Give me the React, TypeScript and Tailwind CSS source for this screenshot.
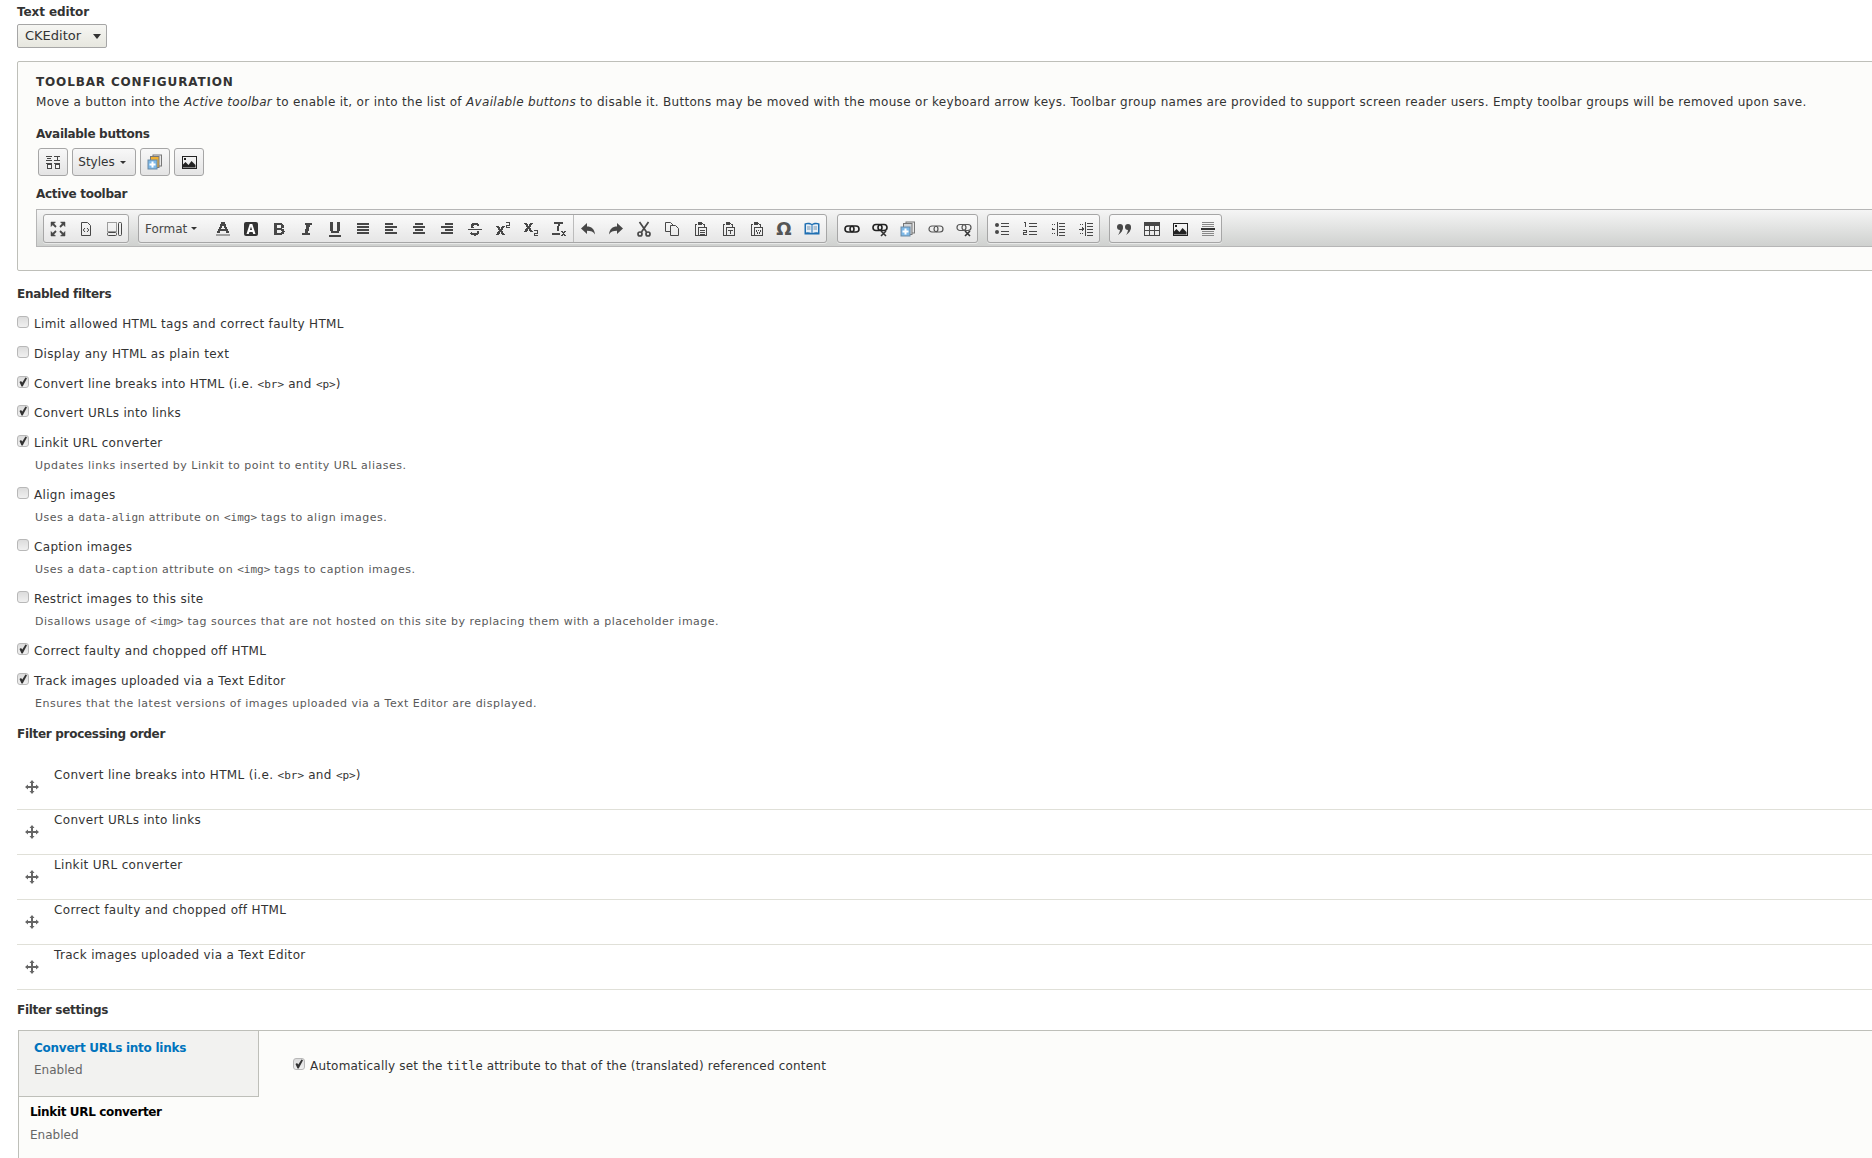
import type { ReactNode } from "react";

const ink = "#474747";

function Glyph({ children, size = 16 }: { children: ReactNode; size?: number }) {
  return (
    <svg width={size} height={size} viewBox="0 0 16 16" fill={ink} shapeRendering="crispEdges">
      {children}
    </svg>
  );
}

function Lines({ rows }: { rows: [number, number][] }) {
  return (
    <Glyph>
      {rows.map(([x, w], i) => (
        <rect key={i} x={x} y={2 + i * 3} width={w} height="2" />
      ))}
    </Glyph>
  );
}

function Clipboard({ children }: { children: ReactNode }) {
  return (
    <Glyph>
      <path d="M3 3h2v1H4v10h2v1H3zM11 3h2v4h-1V4h-1z" />
      <rect x="5.5" y="1" width="5" height="3" rx="1" />
      <rect x="6.5" y="6.5" width="7.5" height="8" fill="none" stroke={ink} />
      {children}
    </Glyph>
  );
}

function ChainLink({ dark, broken }: { dark?: boolean; broken?: boolean }) {
  const stroke = dark ? "#222" : "#555";
  return (
    <svg width="16" height="16" viewBox="0 0 16 16" fill="none" stroke={stroke} strokeWidth={dark ? 1.6 : 1.2}>
      <rect x="1" y={broken ? 3.5 : 5} width="9" height="6" rx="3" />
      <rect x="6" y={broken ? 3.5 : 5} width="9" height="6" rx="3" />
      {broken && <path d="M9 10l5 5M14 10l-5 5" stroke="#333" strokeWidth="1.6" />}
    </svg>
  );
}

function Stack({ warm }: { warm?: boolean }) {
  return (
    <svg width="16" height="16" viewBox="0 0 16 16">
      <rect x="6" y="1" width="8.5" height="11" fill="#e8e8e8" stroke="#777" />
      <rect x="3.5" y="2.5" width="8.5" height="11" fill={warm ? "#f0b030" : "#d0d4d8"} stroke="#777" />
      <rect x="1" y="6" width="9" height="9" fill="#7db9e8" stroke="#6a8aa5" />
      <path d="M4.500 7.500h2v2h2v2h-2v2h-2v-2h-2v-2h2z" fill="#fff" />
    </svg>
  );
}

function ImageGlyph() {
  return (
    <Glyph>
      <rect x="1" y="2" width="14" height="12" fill="none" stroke="#222" />
      <rect x="3" y="4" width="2" height="2" fill="#222" />
      <path d="M1.5 13.5V11l3-3 3 3 3-4 4 4v2.5z" fill="#222" shapeRendering="auto" />
    </Glyph>
  );
}

const icons: Record<string, ReactNode> = {
  maximize: (
    <svg width="16" height="16" viewBox="0 0 16 16" fill={ink} stroke={ink}>
      <path d="M1 1h4.500L1 5.500zM15 1v4.500L10.500 1zM1 15v-4.500L5.500 15zM15 15h-4.500L15 10.500z" strokeWidth="0.5" />
      <path d="M3 3l3 3M13 3l-3 3M3 13l3-3M13 13l-3-3" strokeWidth="1.800" />
    </svg>
  ),
  source: (
    <svg width="16" height="16" viewBox="0 0 16 16" fill="none" stroke={ink}>
      <path d="M3.500 1.500h6l3 3v10h-9z" />
      <path d="M7 7L5.200 9 7 11M9 7l1.800 2L9 11" />
    </svg>
  ),
  sdm: (
    <svg width="16" height="16" viewBox="0 0 16 16" fill="none" stroke={ink}>
      <rect x="1.500" y="1.500" width="9" height="9" strokeDasharray="1 1" />
      <rect x="1.500" y="11.500" width="9" height="3" rx="1" />
      <rect x="12.500" y="1.500" width="3" height="13" rx="1" />
    </svg>
  ),
  color: (
    <Glyph>
      <path d="M6.500 1h3L14 11.500h-2.600l-.8-2H5.400l-.8 2H2zM8 4L6.200 7.600h3.600z" />
      <rect x="1" y="13" width="14" height="2" fill="#a0a0a0" />
    </Glyph>
  ),
  bg: (
    <svg width="16" height="16" viewBox="0 0 16 16">
      <rect x="1" y="1" width="14" height="14" rx="2" fill="#333" />
      <path d="M6.700 3h2.600l3.200 10h-2.300l-.6-2H6.400l-.6 2H3.500zM8 5.500L6.900 9h2.200z" fill="#fff" />
    </svg>
  ),
  bold: (
    <Glyph>
      <path d="M3 2h6.500C12 2 13 3.400 13 5c0 1.200-.7 2.200-1.800 2.600C12.700 8 13.600 9.200 13.600 10.700 13.600 12.800 12 14 9.800 14H3zM5.800 4.200v2.700h3c1 0 1.500-.5 1.500-1.400 0-.8-.5-1.300-1.500-1.300zM5.800 9v2.800h3.300c1 0 1.700-.5 1.700-1.400S10.100 9 9.100 9z" />
    </Glyph>
  ),
  italic: (
    <Glyph>
      <path d="M6 2h7v2h-2L9 12h2v2H3v-2h2.500L7.500 4H5.500z" />
    </Glyph>
  ),
  underline: (
    <Glyph>
      <path d="M3 1h2.800v7c0 1.600.8 2.300 2.200 2.300s2.200-.7 2.200-2.300V1H13v7.200c0 3-1.800 4.300-5 4.300s-5-1.300-5-4.300zM2 14h12v1.500H2z" />
    </Glyph>
  ),
  justify: <Lines rows={[[2, 12], [2, 12], [2, 12], [2, 12]]} />,
  left: <Lines rows={[[2, 8], [2, 12], [2, 8], [2, 12]]} />,
  center: <Lines rows={[[4, 8], [2, 12], [4, 8], [2, 12]]} />,
  right: <Lines rows={[[6, 8], [2, 12], [6, 8], [2, 12]]} />,
  strike: (
    <Glyph>
      <path d="M12.500 3.200 11.800 5.300C10.700 4.600 9.500 4.200 8.400 4.200 7 4.200 6.200 4.800 6.200 5.500c0 .5.300.9 1 1.200h-3c-.4-.5-.7-1.100-.7-1.900C3.500 2.800 5.500 1.500 8.300 1.500c1.700 0 3.100.6 4.200 1.700zM11.800 9.500c.4.500.7 1.100.7 1.800 0 2.100-1.900 3.400-4.700 3.400-1.900 0-3.500-.6-4.800-1.800l.9-2c1.200 1 2.500 1.500 3.800 1.500 1.300 0 2.100-.5 2.100-1.300 0-.6-.4-1.100-1.300-1.600z" />
      <rect x="1" y="7.500" width="14" height="1.500" />
    </Glyph>
  ),
  sup: (
    <Glyph>
      <path d="M1 5h2.800l1.700 2.600L7.200 5H10L7 9.300 10.200 14H7.300l-1.800-2.800L3.700 14H.8L4 9.300z" />
      <path d="M11 1h4v3.500h-3V6h3v1h-4V3.500h3V2h-3z" />
    </Glyph>
  ),
  sub: (
    <Glyph>
      <path d="M1 2h2.800l1.700 2.600L7.200 2H10L7 6.300 10.200 11H7.300L5.500 8.200 3.700 11H.8L4 6.300z" />
      <path d="M11 9h4v3.500h-3V14h3v1h-4v-3.500h3V10h-3z" />
    </Glyph>
  ),
  remove: (
    <Glyph>
      <path d="M3 1h9v2H9L7.500 10H5.500L7 3H3z" />
      <rect x="1" y="12" width="8" height="1.500" />
      <path d="M10 10h1.500l1 1.500 1-1.500H15l-1.800 2.500L15 15h-1.500l-1-1.500-1 1.500H10l1.800-2.500z" />
    </Glyph>
  ),
  undo: (
    <svg width="16" height="16" viewBox="0 0 16 16" fill={ink}>
      <path d="M7 2v3.500c4.500 0 7.500 2.500 8 8-1.500-3-4-3.800-8-3.800V13L1 7.500z" />
    </svg>
  ),
  redo: (
    <svg width="16" height="16" viewBox="0 0 16 16" fill={ink}>
      <path d="M9 2v3.500c-4.500 0-7.500 2.500-8 8 1.500-3 4-3.800 8-3.800V13l6-5.500z" />
    </svg>
  ),
  cut: (
    <svg width="16" height="16" viewBox="0 0 16 16" fill="none" stroke={ink} strokeWidth="1.700">
      <path d="M3.500 1l7 10M12.500 1l-7 10" />
      <circle cx="4" cy="13" r="2" />
      <circle cx="12" cy="13" r="2" />
    </svg>
  ),
  copy: (
    <svg width="16" height="16" viewBox="0 0 16 16" fill="none" stroke={ink}>
      <path d="M6.500 10.500h-5v-9h5l3 3" />
      <path d="M6.500 4.500h5l3 3v7h-8z" />
    </svg>
  ),
  paste: (
    <Clipboard>
      <path d="M8 8.500h4.500v1H8zM8 10.500h4.500v1H8zM8 12.500h4.500v1H8z" />
    </Clipboard>
  ),
  pastetext: (
    <Clipboard>
      <path d="M8 8.500h4.500v1.200H11V13H9.500V9.700H8z" />
    </Clipboard>
  ),
  pasteword: (
    <Clipboard>
      <path d="M7.800 8.500h1l.6 3 .6-3h1l.6 3 .6-3h.8l-1 4.500h-.9l-.6-2.800-.6 2.800h-.9z" />
    </Clipboard>
  ),
  omega: <span className="text-[18px] leading-none font-bold tracking-normal text-[#555]">Ω</span>,
  book: (
    <svg width="16" height="16" viewBox="0 0 16 16">
      <path d="M0.500 2.500C3 1.500 6 1.500 8 3c2-1.500 5-1.500 7.500-.5v11H0.500z" fill="#1f6fb2" />
      <path d="M2 3.500c2-.6 4-.4 5.500.6v8c-1.500-.8-3.500-1-5.500-.6zM14 3.500c-2-.6-4-.4-5.500.6v8c1.500-.8 3.500-1 5.500-.6z" fill="#e6eef5" />
      <path d="M3 6h3.500M3 8h3.500M9.500 6H13M9.500 8H13" stroke="#7a97b0" />
    </svg>
  ),
  drupallink: <ChainLink dark />,
  drupalunlink: <ChainLink dark broken />,
  drupalimage: <Stack />,
  link: <ChainLink />,
  unlink: <ChainLink broken />,
  bullets: (
    <Glyph>
      <circle cx="3" cy="4" r="2" shapeRendering="auto" />
      <circle cx="3" cy="11" r="2" shapeRendering="auto" />
      <rect x="7" y="2" width="8" height="1" />
      <rect x="7" y="5" width="8" height="1" />
      <rect x="7" y="10" width="8" height="1" />
      <rect x="7" y="13" width="8" height="1" />
    </Glyph>
  ),
  numbers: (
    <Glyph>
      <path d="M2 1h2v5H3V2H2zM1 9h4v3H2v1h3v1H1v-3h3v-1H1z" />
      <rect x="7" y="2" width="8" height="1" />
      <rect x="7" y="5" width="8" height="1" />
      <rect x="7" y="10" width="8" height="1" />
      <rect x="7" y="13" width="8" height="1" />
    </Glyph>
  ),
  outdent: (
    <Glyph>
      <rect x="7" y="1" width="1" height="14" />
      <rect x="9" y="2" width="6" height="1" />
      <rect x="9" y="5" width="6" height="1" />
      <rect x="9" y="8" width="6" height="1" />
      <rect x="9" y="11" width="6" height="1" />
      <rect x="9" y="14" width="6" height="1" />
      <path d="M1 8l2-2v1.500h2v1H3V10z" />
      <rect x="2" y="3" width="1" height="1" />
      <rect x="4" y="3" width="1" height="1" />
      <rect x="2" y="12" width="1" height="1" />
      <rect x="4" y="12" width="1" height="1" />
    </Glyph>
  ),
  indent: (
    <Glyph>
      <rect x="7" y="1" width="1" height="14" />
      <rect x="9" y="2" width="6" height="1" />
      <rect x="9" y="5" width="6" height="1" />
      <rect x="9" y="8" width="6" height="1" />
      <rect x="9" y="11" width="6" height="1" />
      <rect x="9" y="14" width="6" height="1" />
      <path d="M6 8L4 6v1.500H1v1h3V10z" />
      <rect x="2" y="3" width="1" height="1" />
      <rect x="4" y="3" width="1" height="1" />
      <rect x="2" y="12" width="1" height="1" />
      <rect x="4" y="12" width="1" height="1" />
    </Glyph>
  ),
  quote: (
    <svg width="16" height="16" viewBox="0 0 16 16" fill={ink}>
      <circle cx="4" cy="6" r="3" />
      <circle cx="12" cy="6" r="3" />
      <path d="M7 6c0 3-1.500 6-5 8 1.500-2 2-4 2-6zM15 6c0 3-1.500 6-5 8 1.500-2 2-4 2-6z" />
    </svg>
  ),
  table: (
    <svg width="16" height="16" viewBox="0 0 16 16" fill="none" stroke={ink} shapeRendering="crispEdges">
      <rect x="0.500" y="1.500" width="15" height="13" />
      <rect x="0.500" y="1.500" width="15" height="3" fill={ink} />
      <path d="M5.500 4.500v10M10.500 4.500v10M0.500 9.500h15" />
    </svg>
  ),
  image: <ImageGlyph />,
  hr: (
    <Glyph>
      <g fill="#888">
        <rect x="2" y="1" width="12" height="1" />
        <rect x="2" y="3" width="12" height="1" />
        <rect x="2" y="5" width="12" height="1" />
        <rect x="2" y="10" width="12" height="1" />
        <rect x="2" y="12" width="12" height="1" />
        <rect x="2" y="14" width="12" height="1" />
      </g>
      <rect x="1" y="7" width="14" height="2" fill="#333" />
    </Glyph>
  ),
  styles: (
    <Glyph>
      <path d="M1 2h6v1H1zM2 4h4v1H2zM1 6h6v1H1zM9 2h6v1h-6zM11.500 3h1v3h-1zM9 6h6v1H9zM1 9h6v1H1zM1.500 10h5v5h-5zM9 9h6v1H9zM9.500 10h5v5h-5z" fillRule="evenodd" />
      <rect x="2.500" y="11" width="3" height="3" fill="#f5f5f5" />
      <rect x="10.500" y="11" width="3" height="3" fill="#f5f5f5" />
    </Glyph>
  ),
};

const caret = <span className="inline-block border-x-[3px] border-t-[3px] border-x-transparent border-t-[#333]" />;

function ToolButton({ name }: { name: string }) {
  return <div className="flex h-full w-[28px] shrink-0 items-center justify-center">{icons[name]}</div>;
}

function ToolGroup({ children, className }: { children: ReactNode; className: string }) {
  return (
    <div
      className={`flex h-[29px] items-center justify-center rounded-[3px] border border-[#a6a6a6] bg-gradient-to-b from-[#fafafa] to-[#e6e6e6] shadow-[0_1px_0_#ffffff80] ${className}`}
    >
      {children}
    </div>
  );
}

function AvailableButton({ children, wide }: { children: ReactNode; wide?: boolean }) {
  return (
    <div
      className={`flex h-[28px] items-center justify-center rounded-[3px] border border-[#a6a6a6] bg-gradient-to-b from-[#f8f8f8] to-[#e4e4e4] ${
        wide ? "w-[64px] gap-[5px] pr-[4px]" : "w-[30px]"
      }`}
    >
      {children}
    </div>
  );
}

function Code({ children, className = "text-[11px]" }: { children: ReactNode; className?: string }) {
  return <code className={`font-['DejaVu_Sans_Mono',monospace] tracking-normal ${className}`}>{children}</code>;
}

function Checkbox({ checked }: { checked?: boolean }) {
  return (
    <span className="mb-[5px] flex h-[12px] w-[12px] shrink-0 items-center justify-center rounded-[3px] border border-[#b8b8b8] bg-gradient-to-b from-[#dcdcdc] to-[#f0f0f0]">
      {checked && (
        <svg width="10" height="10" viewBox="0 0 10 10" fill="#333">
          <path d="M1.500 5l1.500-1 1.300 1.500L7.500 .5 9 1.200 4.700 9.500H3.500z" />
        </svg>
      )}
    </span>
  );
}

type Filter = { label: ReactNode; checked?: boolean; note?: ReactNode; gap: string };

const lineBreaks = (
  <>
    Convert line breaks into HTML (i.e. <Code>&lt;br&gt;</Code> and <Code>&lt;p&gt;</Code>)
  </>
);

const filters: Filter[] = [
  { label: "Limit allowed HTML tags and correct faulty HTML", gap: "mt-[0px]" },
  { label: "Display any HTML as plain text", gap: "mt-[14px]" },
  { label: lineBreaks, checked: true, gap: "mt-[14px]" },
  { label: "Convert URLs into links", checked: true, gap: "mt-[13px]" },
  {
    label: "Linkit URL converter",
    checked: true,
    gap: "mt-[14px]",
    note: "Updates links inserted by Linkit to point to entity URL aliases.",
  },
  {
    label: "Align images",
    gap: "mt-[14px]",
    note: (
      <>
        Uses a <Code>data-align</Code> attribute on <Code>&lt;img&gt;</Code> tags to align images.
      </>
    ),
  },
  {
    label: "Caption images",
    gap: "mt-[14px]",
    note: (
      <>
        Uses a <Code>data-caption</Code> attribute on <Code>&lt;img&gt;</Code> tags to caption images.
      </>
    ),
  },
  {
    label: "Restrict images to this site",
    gap: "mt-[14px]",
    note: (
      <>
        Disallows usage of <Code>&lt;img&gt;</Code> tag sources that are not hosted on this site by replacing them with a
        placeholder image.
      </>
    ),
  },
  { label: "Correct faulty and chopped off HTML", checked: true, gap: "mt-[14px]" },
  {
    label: "Track images uploaded via a Text Editor",
    checked: true,
    gap: "mt-[14px]",
    note: "Ensures that the latest versions of images uploaded via a Text Editor are displayed.",
  },
];

const order: ReactNode[] = [
  lineBreaks,
  "Convert URLs into links",
  "Linkit URL converter",
  "Correct faulty and chopped off HTML",
  "Track images uploaded via a Text Editor",
];

function DragHandle() {
  return (
    <svg width="14" height="14" viewBox="0 0 14 14" fill="#666">
      <path d="M7 0l2.500 3H8v3h3V4.500L14 7l-3 2.500V8H8v3h1.500L7 14l-2.500-3H6V8H3v1.500L0 7l3-2.500V6h3V3H4.500z" />
    </svg>
  );
}

function Heading({ children, className = "tracking-[-0.3px]" }: { children: ReactNode; className?: string }) {
  return <div className={`text-[12px] leading-[16px] font-bold text-[#333] ${className}`}>{children}</div>;
}

export default function App() {
  return (
    <div className="h-[1158px] w-[1872px] overflow-hidden bg-white pt-[4px] font-['DejaVu_Sans',sans-serif] text-[12px] leading-[16px] tracking-[0.33px] text-[#333]">
      <div className="w-[2000px] pl-[17px]">
        <Heading className="tracking-[-0.1px]">Text editor</Heading>
        <div className="mt-[4px] flex h-[24px] w-[90px] items-center justify-between rounded-[2px] border border-[#a6a6a6] bg-gradient-to-b from-[#f6f6f3] to-[#e7e7df] pr-[5px] pl-[7px] text-[13px] tracking-normal">
          <span>CKEditor</span>
          <span className="inline-block border-x-[4px] border-t-[5px] border-x-transparent border-t-[#333]" />
        </div>

        <fieldset className="mt-[13px] h-[210px] rounded-[2px] border border-[#bebfb9] bg-[#fcfcfa] pt-[12px] pl-[18px]">
          <div className="text-[12px] leading-[16px] font-bold tracking-[0.85px] uppercase">Toolbar configuration</div>
          <p className="mt-[4px] tracking-[0.31px]">
            Move a button into the <em>Active toolbar</em> to enable it, or into the list of <em>Available buttons</em> to
            disable it. Buttons may be moved with the mouse or keyboard arrow keys. Toolbar group names are provided to
            support screen reader users. Empty toolbar groups will be removed upon save.
          </p>

          <Heading className="mt-[16px] tracking-[-0.3px]">Available buttons</Heading>
          <div className="mt-[6px] ml-[2px] flex gap-[4px]">
            <AvailableButton>{icons.styles}</AvailableButton>
            <AvailableButton wide>
              <span className="tracking-normal text-[#333]">Styles</span>
              {caret}
            </AvailableButton>
            <AvailableButton>
              <Stack warm />
            </AvailableButton>
            <AvailableButton>{icons.image}</AvailableButton>
          </div>

          <Heading className="mt-[10px] tracking-[-0.3px]">Active toolbar</Heading>
          <div className="mt-[7px] flex h-[38px] items-start gap-[9px] border border-[#b6b6b6] bg-gradient-to-b from-[#f5f5f5] to-[#cfd1cf] pt-[4px] pl-[6px]">
            <ToolGroup className="w-[86px]">
              <ToolButton name="maximize" />
              <ToolButton name="source" />
              <ToolButton name="sdm" />
            </ToolGroup>
            <ToolGroup className="w-[689px]">
              <div className="flex h-full w-[70px] items-center gap-[4px] pl-[6px] tracking-normal text-[#474747]">
                <span>Format</span>
                {caret}
              </div>
              {["color", "bg", "bold", "italic", "underline", "justify", "left", "center", "right", "strike", "sup", "sub", "remove"].map((n) => (
                <ToolButton key={n} name={n} />
              ))}
              <span className="h-[27px] w-px bg-[#bcbcbc]" />
              {["undo", "redo", "cut", "copy", "paste", "pastetext", "pasteword", "omega", "book"].map((n) => (
                <ToolButton key={n} name={n} />
              ))}
            </ToolGroup>
            <ToolGroup className="ml-px w-[141px]">
              {["drupallink", "drupalunlink", "drupalimage", "link", "unlink"].map((n) => (
                <ToolButton key={n} name={n} />
              ))}
            </ToolGroup>
            <ToolGroup className="w-[113px]">
              {["bullets", "numbers", "outdent", "indent"].map((n) => (
                <ToolButton key={n} name={n} />
              ))}
            </ToolGroup>
            <ToolGroup className="w-[113px]">
              {["quote", "table", "image", "hr"].map((n) => (
                <ToolButton key={n} name={n} />
              ))}
            </ToolGroup>
          </div>
        </fieldset>

        <Heading className="mt-[15px] tracking-[-0.3px]">Enabled filters</Heading>
        <div className="mt-[14px]">
          {filters.map((f, i) => (
            <div key={i} className={f.gap}>
              <div className="flex h-[16px] items-center gap-[5px]">
                <Checkbox checked={f.checked} />
                <span>{f.label}</span>
              </div>
              {f.note && (
                <div className="mt-[8px] ml-[18px] text-[11px] leading-[14px] tracking-[0.5px] text-[#595959]">{f.note}</div>
              )}
            </div>
          ))}
        </div>

        <Heading className="mt-[15px] tracking-[-0.3px]">Filter processing order</Heading>
        <div className="mt-[23px]">
          {order.map((label, i) => (
            <div key={i} className="flex h-[45px] border-b border-[#e0e0d8] pt-[2px]">
              <div className="flex w-[37px] justify-center pt-[13px] pr-[7px]">
                <DragHandle />
              </div>
              <span>{label}</span>
            </div>
          ))}
        </div>

        <Heading className="mt-[12px] tracking-[-0.3px]">Filter settings</Heading>
        <div className="mt-[12px] ml-[1px] flex h-[200px] border-t border-l border-[#bebfb9] bg-[#fcfcfa]">
          <div className="w-[240px] shrink-0">
            <div className="h-[66px] w-[240px] border-r border-b border-[#bebfb9] bg-[#f2f2f0] pt-[9px] pl-[15px]">
              <div className="font-bold tracking-[-0.26px] text-[#0074bd]">Convert URLs into links</div>
              <div className="mt-[6px] tracking-normal text-[#666]">Enabled</div>
            </div>
            <div className="pt-[7px] pl-[11px]">
              <div className="font-bold tracking-[-0.35px] text-black">Linkit URL converter</div>
              <div className="mt-[7px] tracking-normal text-[#666]">Enabled</div>
            </div>
          </div>
          <div className="mt-[27px] ml-[34px] flex h-[16px] items-center gap-[5px]">
            <Checkbox checked />
            <span className="tracking-[0.2px]">
              Automatically set the <Code className="text-[12px]">title</Code> attribute to that of the (translated) referenced content
            </span>
          </div>
        </div>
      </div>
    </div>
  );
}
